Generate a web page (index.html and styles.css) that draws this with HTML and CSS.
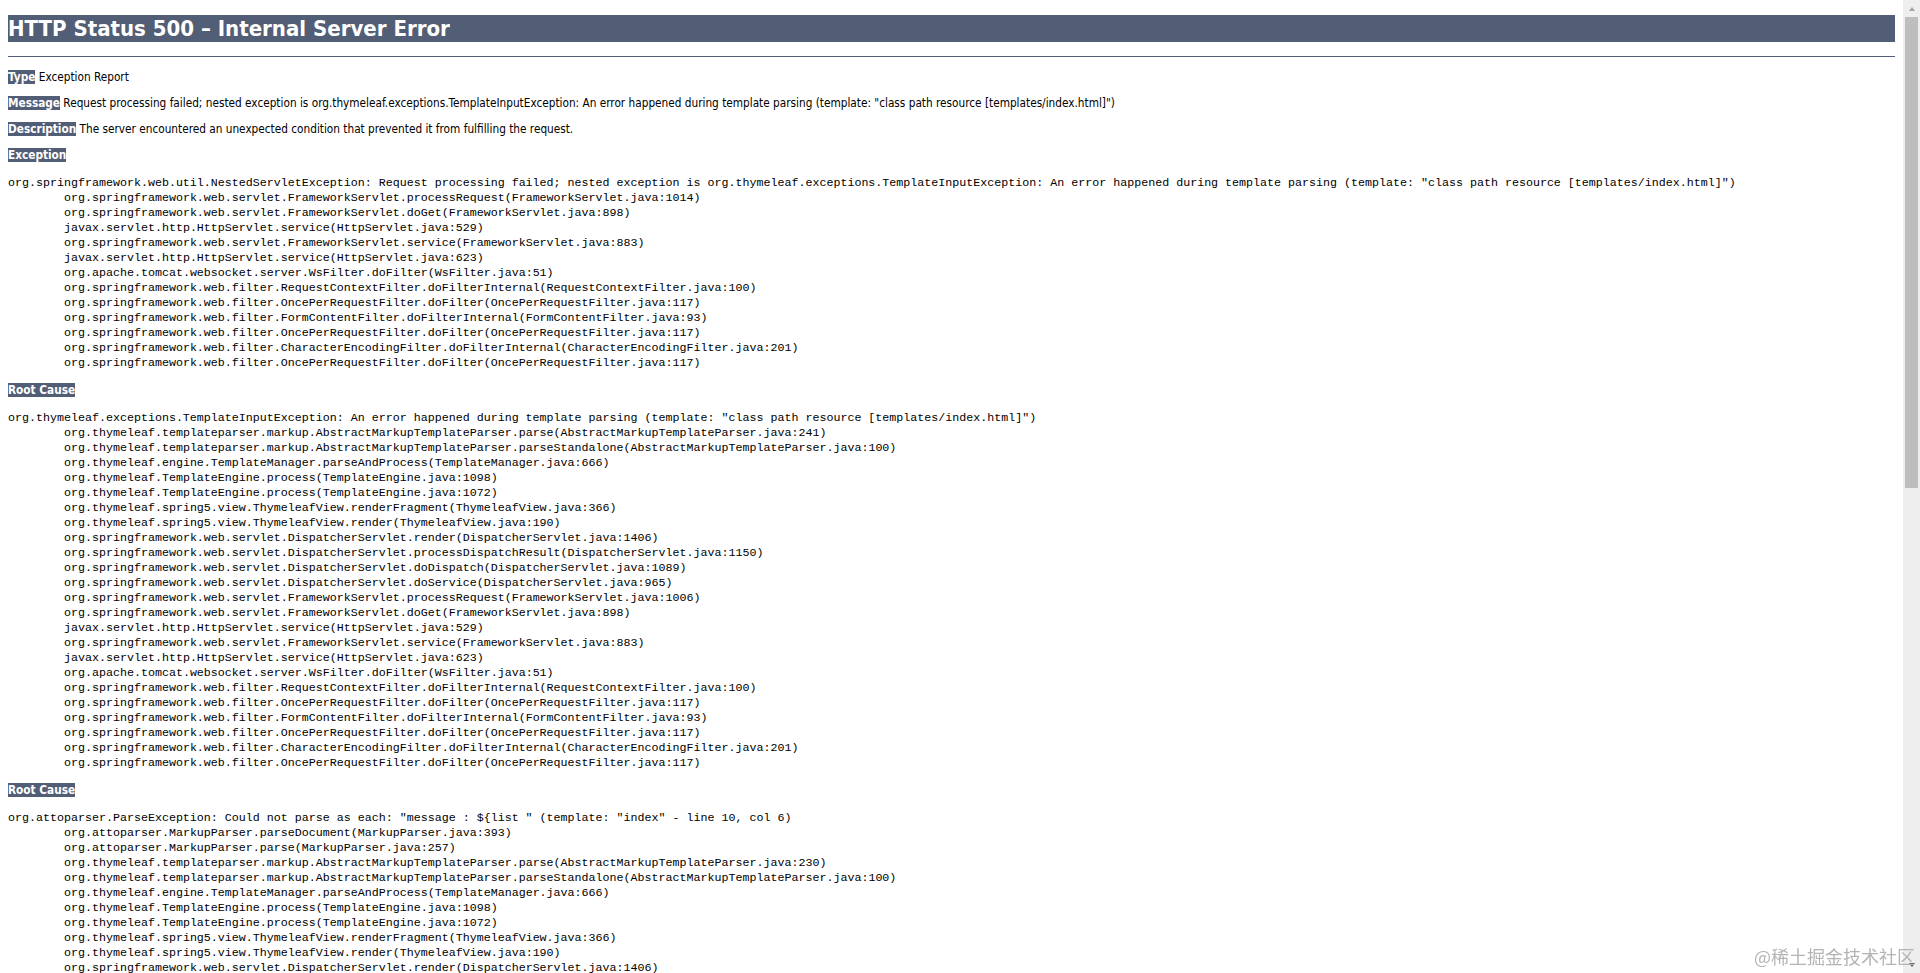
FILE: index.html
```html
<!DOCTYPE html>
<html lang="en">
<head>
<meta charset="utf-8">
<title>HTTP Status 500 – Internal Server Error</title>
<link rel="stylesheet" href="styles.css">
</head>
<body>
<div class="window">
<main class="page">
<h1>HTTP Status 500 – Internal Server Error</h1>
<hr class="line">
<p><b>Type</b> Exception Report</p>
<p><b>Message</b> Request processing failed; nested exception is org.thymeleaf.exceptions.TemplateInputException: An error happened during template parsing (template: "class path resource [templates/index.html]")</p>
<p><b>Description</b> The server encountered an unexpected condition that prevented it from fulfilling the request.</p>
<p><b>Exception</b></p>
<pre>org.springframework.web.util.NestedServletException: Request processing failed; nested exception is org.thymeleaf.exceptions.TemplateInputException: An error happened during template parsing (template: "class path resource [templates/index.html]")
	org.springframework.web.servlet.FrameworkServlet.processRequest(FrameworkServlet.java:1014)
	org.springframework.web.servlet.FrameworkServlet.doGet(FrameworkServlet.java:898)
	javax.servlet.http.HttpServlet.service(HttpServlet.java:529)
	org.springframework.web.servlet.FrameworkServlet.service(FrameworkServlet.java:883)
	javax.servlet.http.HttpServlet.service(HttpServlet.java:623)
	org.apache.tomcat.websocket.server.WsFilter.doFilter(WsFilter.java:51)
	org.springframework.web.filter.RequestContextFilter.doFilterInternal(RequestContextFilter.java:100)
	org.springframework.web.filter.OncePerRequestFilter.doFilter(OncePerRequestFilter.java:117)
	org.springframework.web.filter.FormContentFilter.doFilterInternal(FormContentFilter.java:93)
	org.springframework.web.filter.OncePerRequestFilter.doFilter(OncePerRequestFilter.java:117)
	org.springframework.web.filter.CharacterEncodingFilter.doFilterInternal(CharacterEncodingFilter.java:201)
	org.springframework.web.filter.OncePerRequestFilter.doFilter(OncePerRequestFilter.java:117)
</pre>
<p><b>Root Cause</b></p>
<pre>org.thymeleaf.exceptions.TemplateInputException: An error happened during template parsing (template: "class path resource [templates/index.html]")
	org.thymeleaf.templateparser.markup.AbstractMarkupTemplateParser.parse(AbstractMarkupTemplateParser.java:241)
	org.thymeleaf.templateparser.markup.AbstractMarkupTemplateParser.parseStandalone(AbstractMarkupTemplateParser.java:100)
	org.thymeleaf.engine.TemplateManager.parseAndProcess(TemplateManager.java:666)
	org.thymeleaf.TemplateEngine.process(TemplateEngine.java:1098)
	org.thymeleaf.TemplateEngine.process(TemplateEngine.java:1072)
	org.thymeleaf.spring5.view.ThymeleafView.renderFragment(ThymeleafView.java:366)
	org.thymeleaf.spring5.view.ThymeleafView.render(ThymeleafView.java:190)
	org.springframework.web.servlet.DispatcherServlet.render(DispatcherServlet.java:1406)
	org.springframework.web.servlet.DispatcherServlet.processDispatchResult(DispatcherServlet.java:1150)
	org.springframework.web.servlet.DispatcherServlet.doDispatch(DispatcherServlet.java:1089)
	org.springframework.web.servlet.DispatcherServlet.doService(DispatcherServlet.java:965)
	org.springframework.web.servlet.FrameworkServlet.processRequest(FrameworkServlet.java:1006)
	org.springframework.web.servlet.FrameworkServlet.doGet(FrameworkServlet.java:898)
	javax.servlet.http.HttpServlet.service(HttpServlet.java:529)
	org.springframework.web.servlet.FrameworkServlet.service(FrameworkServlet.java:883)
	javax.servlet.http.HttpServlet.service(HttpServlet.java:623)
	org.apache.tomcat.websocket.server.WsFilter.doFilter(WsFilter.java:51)
	org.springframework.web.filter.RequestContextFilter.doFilterInternal(RequestContextFilter.java:100)
	org.springframework.web.filter.OncePerRequestFilter.doFilter(OncePerRequestFilter.java:117)
	org.springframework.web.filter.FormContentFilter.doFilterInternal(FormContentFilter.java:93)
	org.springframework.web.filter.OncePerRequestFilter.doFilter(OncePerRequestFilter.java:117)
	org.springframework.web.filter.CharacterEncodingFilter.doFilterInternal(CharacterEncodingFilter.java:201)
	org.springframework.web.filter.OncePerRequestFilter.doFilter(OncePerRequestFilter.java:117)
</pre>
<p><b>Root Cause</b></p>
<pre>org.attoparser.ParseException: Could not parse as each: "message : ${list " (template: "index" - line 10, col 6)
	org.attoparser.MarkupParser.parseDocument(MarkupParser.java:393)
	org.attoparser.MarkupParser.parse(MarkupParser.java:257)
	org.thymeleaf.templateparser.markup.AbstractMarkupTemplateParser.parse(AbstractMarkupTemplateParser.java:230)
	org.thymeleaf.templateparser.markup.AbstractMarkupTemplateParser.parseStandalone(AbstractMarkupTemplateParser.java:100)
	org.thymeleaf.engine.TemplateManager.parseAndProcess(TemplateManager.java:666)
	org.thymeleaf.TemplateEngine.process(TemplateEngine.java:1098)
	org.thymeleaf.TemplateEngine.process(TemplateEngine.java:1072)
	org.thymeleaf.spring5.view.ThymeleafView.renderFragment(ThymeleafView.java:366)
	org.thymeleaf.spring5.view.ThymeleafView.render(ThymeleafView.java:190)
	org.springframework.web.servlet.DispatcherServlet.render(DispatcherServlet.java:1406)
</pre>
</main>
<div class="scrollbar">
<div class="scroll-btn"><span class="arrow-up"></span></div>
<div class="scroll-track"><div class="scroll-thumb"></div></div>
<div class="scroll-btn"><span class="arrow-down"></span></div>
</div>
</div>
<div class="watermark">@稀土掘金技术社区</div>
</body>
</html>
```

FILE: styles.css
```css
html, body {
  margin: 0;
  height: 100%;
  overflow: hidden;
  background: #fff;
}
.window {
  display: flex;
  height: 973px;
  overflow: hidden;
}
.page {
  flex: 1;
  min-width: 0;
  padding: 15px 8px 0;
  font-family: "DejaVu Sans Condensed", "DejaVu Sans", sans-serif;
  font-stretch: condensed;
  color: #000;
  overflow: hidden;
}
h1 {
  margin: 0 0 14px;
  height: 27px;
  padding: 0;
  font-size: 22px;
  line-height: 27px;
  font-weight: 700;
  color: #fff;
  background: #525d76;
}
.line {
  height: 1px;
  margin: 0 0 13px;
  border: 0;
  background: #525d76;
}
p {
  margin: 12px 0;
  font-size: 11.72px;
  line-height: 14px;
}
b {
  color: #fff;
  background: #525d76;
}
pre {
  margin: 14px 0 12px;
  font-family: "Liberation Mono", monospace;
  font-size: 11.67px;
  line-height: 15px;
  tab-size: 8;
}
.scrollbar {
  flex: none;
  width: 17px;
  display: flex;
  flex-direction: column;
  background: #eeeeee;
}
.scroll-btn {
  flex: none;
  height: 17px;
  display: flex;
  align-items: center;
  justify-content: center;
}
.scroll-track {
  flex: 1;
  padding: 0 2px;
}
.scroll-thumb {
  height: 471px;
  background: #bebebe;
}
.arrow-up,
.arrow-down {
  width: 0;
  height: 0;
  border-left: 3.5px solid transparent;
  border-right: 3.5px solid transparent;
}
.arrow-up { border-bottom: 4px solid #a3a3a3; }
.arrow-down { border-top: 4px solid #505050; }
.watermark {
  position: fixed;
  right: 5px;
  bottom: 6px;
  font-family: "Noto Sans CJK SC", sans-serif;
  font-size: 18px;
  line-height: 22px;
  color: #b4b4b4;
}
```
